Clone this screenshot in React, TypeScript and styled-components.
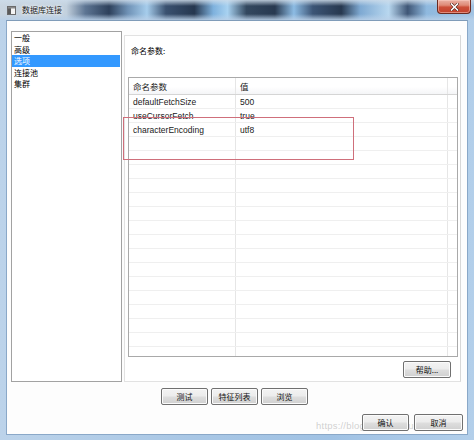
import React from 'react';
import styled, { createGlobalStyle } from 'styled-components';

const GlobalStyle = createGlobalStyle`
	html, body {
		margin: 0;
		padding: 0;
		background: #ffffff;
	}
	body {
		font-family: 'Liberation Sans', 'Noto Sans CJK SC', sans-serif;
		font-size: 8.5px;
		color: #000;
	}
`;

const Frame = styled.div`
	position: relative;
	display: flex;
	flex-direction: column;
	width: 474px;
	height: 440px;
	box-sizing: border-box;
	background: linear-gradient(90deg, #bcd3ea 0%, #a9c7e5 40%, #a0c2e4 70%, #b3cfea 100%);
`;

const TitleBar = styled.div`
	display: flex;
	align-items: flex-start;
	height: 20px;
	flex-shrink: 0;
	padding-left: 7px;
	background:
		linear-gradient(180deg, rgba(205, 220, 234, 0.85) 0%, rgba(205, 220, 234, 0) 30%, rgba(205, 220, 234, 0) 70%, rgba(185, 208, 232, 0.9) 100%),
		linear-gradient(90deg, #c9d5e0 0%, #c3d1de 14%, #5d7593 18%, #2d405b 23%, #6f92b6 27%, #a6cdec 31%, #3a5170 35%,
			#26374f 41%, #7eb1dd 45%, #a8d2f1 48%, #33485f 52%, #283950 58%, #8dbce4 62%, #3c5576 66%, #27384f 72%,
			#7ea9d2 76%, #b8d7ef 82%, #3f5676 86%, #8fb9df 90%, #a2c3e2 100%);
`;

const TitleIcon = styled.svg`
	width: 9px;
	height: 9px;
	margin-top: 6px;
	flex-shrink: 0;
`;

const TitleText = styled.span`
	margin-left: 6px;
	margin-top: 4px;
	font-family: 'Noto Sans CJK SC', sans-serif;
	font-size: 8px;
	line-height: 12px;
	color: #1b1b1b;
	text-shadow: 0 0 4px rgba(255, 255, 255, 0.9), 0 0 2px rgba(255, 255, 255, 0.9);
`;

const CloseButton = styled.div`
	display: flex;
	align-items: center;
	justify-content: center;
	margin-left: auto;
	margin-right: 3px;
	width: 34px;
	height: 14px;
	box-sizing: border-box;
	border: 1px solid #6b2a20;
	border-top: none;
	border-radius: 0 0 4px 4px;
	background: linear-gradient(180deg, #eab2a5 0%, #df8a77 40%, #cc4f39 55%, #c2412c 100%);
	box-shadow: inset 0 0 0 1px rgba(255, 210, 200, 0.5);
`;

const Client = styled.div`
	display: flex;
	flex-direction: column;
	flex: 1;
	margin: 0 6px 5px 6px;
	padding: 0 4px;
	background: #fdfdfd;
	border: 1px solid #8aa8c8;
	border-top-color: #7f9bb8;
	box-sizing: border-box;
`;

const Main = styled.div`
	display: flex;
	gap: 2px;
	height: 351px;
	margin-top: 10px;
	padding-right: 2px;
`;

const NavList = styled.div`
	display: flex;
	flex-direction: column;
	width: 111px;
	flex-shrink: 0;
	box-sizing: border-box;
	border: 1px solid #a2a2a2;
	background: #fff;
`;

const NavItem = styled.div<{ $selected?: boolean }>`
	height: 11.5px;
	line-height: 11.5px;
	padding-left: 2px;
	margin-right: 1px;
	font-family: 'Noto Sans CJK SC', sans-serif;
	font-size: 8px;
	background: ${({ $selected }) => ($selected ? '#3399ff' : 'transparent')};
	color: ${({ $selected }) => ($selected ? '#ffffff' : '#000000')};
`;

const Panel = styled.div`
	display: flex;
	flex-direction: column;
	flex: 1;
	margin-top: 4px;
	padding: 0 2px 0 3px;
	box-sizing: border-box;
	border: 1px solid #e2e2e2;
	border-right-color: #d8d8d8;
	background: #fff;
`;

const PanelLabel = styled.div`
	height: 14px;
	line-height: 14px;
	margin-top: 8px;
	margin-left: 3px;
	font-family: 'Noto Sans CJK SC', sans-serif;
	font-size: 8px;
`;

const Table = styled.div`
	position: relative;
	display: flex;
	flex-direction: column;
	height: 280px;
	margin-top: 19px;
	box-sizing: border-box;
	border: 1px solid #a9a9a9;
`;

const TableBody = styled.div`
	display: flex;
	flex-direction: column;
	flex: 1;
	overflow: hidden;
`;

const Row = styled.div<{ $header?: boolean }>`
	display: flex;
	flex-shrink: 0;
	height: ${({ $header }) => ($header ? '17px' : '14px')};
	box-sizing: border-box;
	border-bottom: 1px solid ${({ $header }) => ($header ? '#d5d5d5' : '#efefef')};
	background: ${({ $header }) => ($header ? 'linear-gradient(180deg, #ffffff 0%, #ffffff 55%, #f4f5f7 100%)' : '#ffffff')};
`;

const Cell = styled.div<{ $width?: number; $cjk?: boolean }>`
	display: flex;
	align-items: center;
	width: ${({ $width }) => ($width ? `${$width}px` : 'auto')};
	flex: ${({ $width }) => ($width ? '0 0 auto' : '1')};
	padding-left: 4px;
	box-sizing: border-box;
	border-right: 1px solid #e6e6e6;
	font-family: ${({ $cjk }) => ($cjk ? "'Noto Sans CJK SC', sans-serif" : "'Liberation Sans', 'Noto Sans CJK SC', sans-serif")};
	font-size: 8.5px;
	color: #1a1a1a;
	white-space: nowrap;

	&:last-child {
		border-right: none;
	}
`;

const Annotation = styled.div`
	position: absolute;
	left: -6px;
	top: 39px;
	z-index: 2;
	width: 231px;
	height: 43px;
	box-sizing: border-box;
	border: 1.5px solid #cf6f7b;
	pointer-events: none;
`;

const HelpRow = styled.div`
	display: flex;
	justify-content: flex-end;
	margin-top: 4px;
	padding-right: 7px;
`;

const Button = styled.button<{ $width?: number }>`
	position: relative;
	display: flex;
	align-items: center;
	justify-content: center;
	width: ${({ $width }) => $width ?? 47}px;
	height: 17px;
	padding: 0;
	box-sizing: border-box;
	border: 1px solid #707070;
	border-radius: 2px;
	background: linear-gradient(180deg, #f3f3f3 0%, #ececec 48%, #dedede 52%, #d0d0d0 100%);
	box-shadow: inset 0 0 0 1px #fbfbfb;
	font-family: 'Noto Sans CJK SC', sans-serif;
	font-size: 8px;
	color: #111;
`;

const ActionRow = styled.div`
	display: flex;
	gap: 3px;
	margin-top: 6px;
	padding-left: 150px;
`;

const FooterRow = styled.div`
	position: relative;
	display: flex;
	justify-content: flex-end;
	gap: 5px;
	margin-top: 9px;
`;

const Watermark = styled.div`
	position: absolute;
	right: 0;
	top: 6px;
	z-index: 0;
	font-family: 'Liberation Sans', sans-serif;
	font-size: 9.5px;
	letter-spacing: 0.2px;
	color: rgba(170, 170, 170, 0.55);
	text-shadow: 0 0 1px rgba(255, 255, 255, 0.6);
	pointer-events: none;
	white-space: nowrap;
`;

const navItems = ['一般', '高级', '选项', '连接池', '集群'];

const params: [string, string][] = [
	['defaultFetchSize', '500'],
	['useCursorFetch', 'true'],
	['characterEncoding', 'utf8'],
];

const EMPTY_ROWS = 16;

export default function App() {
	const rows: [string, string][] = [...params, ...Array.from({ length: EMPTY_ROWS }, () => ['', ''] as [string, string])];

	return (
		<>
			<GlobalStyle />
			<Frame>
				<TitleBar>
					<TitleIcon viewBox="0 0 9 9">
						<rect x="0.5" y="0.5" width="8" height="8" fill="#f4f4f4" stroke="#6b6b6b" />
						<rect x="1" y="1" width="3" height="7" fill="#5a5a5a" />
						<rect x="1" y="1" width="7" height="1.5" fill="#8a8a8a" />
					</TitleIcon>
					<TitleText>数据库连接</TitleText>
					<CloseButton>
						<svg width="9" height="8" viewBox="0 0 9 8">
							<path d="M1.5 1 L7.5 7 M7.5 1 L1.5 7" stroke="#4a1a12" strokeWidth="2.6" strokeLinecap="square" />
							<path d="M1.5 1 L7.5 7 M7.5 1 L1.5 7" stroke="#ffffff" strokeWidth="1.6" strokeLinecap="square" />
						</svg>
					</CloseButton>
				</TitleBar>
				<Client>
					<Main>
						<NavList>
							{navItems.map((item) => (
								<NavItem key={item} $selected={item === '选项'}>
									{item}
								</NavItem>
							))}
						</NavList>
						<Panel>
							<PanelLabel>命名参数:</PanelLabel>
							<Table>
								<Row $header>
									<Cell $width={107} $cjk>命名参数</Cell>
									<Cell $width={212} $cjk>值</Cell>
									<Cell />
								</Row>
								<TableBody>
									{rows.map(([name, value], i) => (
										<Row key={i}>
											<Cell $width={107}>{name}</Cell>
											<Cell $width={212}>{value}</Cell>
											<Cell />
										</Row>
									))}
								</TableBody>
								<Annotation />
							</Table>
							<HelpRow>
								<Button $width={48}>帮助...</Button>
							</HelpRow>
						</Panel>
					</Main>
					<ActionRow>
						<Button>测试</Button>
						<Button>特征列表</Button>
						<Button>浏览</Button>
					</ActionRow>
					<FooterRow>
						<Watermark>https://blog.csdn.net/u013693584</Watermark>
						<Button>确认</Button>
						<Button $width={49}>取消</Button>
					</FooterRow>
				</Client>
			</Frame>
		</>
	);
}
